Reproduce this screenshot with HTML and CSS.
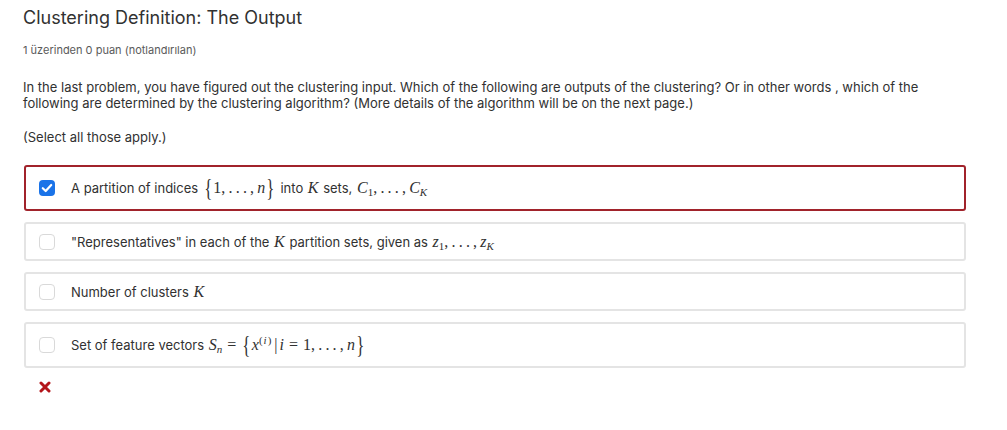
FILE: index.html
```html
<!DOCTYPE html>
<html>
<head>
<meta charset="utf-8">
<link rel="stylesheet" href="styles.css">
</head>
<body>
<div class="page">
  <h1 class="title">Clustering Definition: The Output</h1>
  <div class="points">1 üzerinden 0 puan (notlandırılan)</div>
  <p class="prompt">In the last problem, you have figured out the clustering input. Which of the following are outputs of the clustering? Or in other words , which of the following are determined by the clustering algorithm? (More details of the algorithm will be on the next page.)</p>
  <p class="prompt select">(Select all those apply.)</p>
  <div class="options">
    <label class="option selected tall">
      <span class="box checked"><svg width="16" height="16" viewBox="0 0 16 16"><rect x="0" y="0" width="16" height="16" rx="4" fill="#1a73e8"/><path d="M3.8 8.2 L6.7 11 L12.2 5" fill="none" stroke="#fff" stroke-width="2.2" stroke-linecap="round" stroke-linejoin="round"/></svg></span>
      <span class="text">A partition of indices <span class="m"><span class="brace">{</span>1,&thinsp;.&thinsp;.&thinsp;.&thinsp;,&thinsp;<i>n</i><span class="brace">}</span></span> into <span class="m"><i>K</i></span> sets, <span class="m"><i>C</i><sub>1</sub>,&thinsp;.&thinsp;.&thinsp;.&thinsp;,&thinsp;<i>C</i><sub><i>K</i></sub></span></span>
    </label>
    <label class="option">
      <span class="box"></span>
      <span class="text">"Representatives" in each of the <span class="m"><i>K</i></span> partition sets, given as <span class="m"><i>z</i><sub>1</sub>,&thinsp;.&thinsp;.&thinsp;.&thinsp;,&thinsp;<i>z</i><sub><i>K</i></sub></span></span>
    </label>
    <label class="option">
      <span class="box"></span>
      <span class="text">Number of clusters <span class="m"><i>K</i></span></span>
    </label>
    <label class="option tall">
      <span class="box"></span>
      <span class="text">Set of feature vectors <span class="m"><i>S</i><sub><i>n</i></sub><span class="op">=</span><span class="brace">{</span><i>x</i><sup>(<i>i</i>)</sup><span class="bar">|</span><i>i</i><span class="op">=</span>1,&thinsp;.&thinsp;.&thinsp;.&thinsp;,&thinsp;<i>n</i><span class="brace">}</span></span></span>
    </label>
  </div>
  <div class="status"><svg class="xmark" width="12" height="12" viewBox="0 0 12 12"><path d="M2 2 L10 10 M10 2 L2 10" stroke="#b4161b" stroke-width="3" stroke-linecap="round"/></svg></div>
</div>
</body>
</html>
```

FILE: styles.css
```css
html, body {
  margin: 0;
  padding: 0;
  background: #fff;
}
body {
  font-family: Inter, "Open Sans", "Liberation Sans", sans-serif;
  color: #313131;
}
.page {
  padding: 7px 41px 0 23px;
}
.title {
  margin: 0;
  font-size: 18px;
  font-weight: 400;
  line-height: 22px;
  color: #313131;
}
.points {
  margin-top: 14px;
  font-size: 11px;
  line-height: 14px;
  color: #5a5a5a;
}
.prompt {
  margin: 22px 0 0;
  font-size: 13px;
  line-height: 16px;
  color: #313131;
}
.prompt.select {
  margin-top: 18px;
}
.options {
  margin-top: 20px;
  display: flex;
  flex-direction: column;
  gap: 11px;
  margin-left: 1px;
}
.option {
  display: flex;
  align-items: center;
  height: 39px;
  box-sizing: border-box;
  border: 2px solid #e4e4e4;
  border-radius: 3px;
  padding-left: 13px;
  font-size: 13px;
  color: #313131;
}
.option.tall {
  height: 46px;
}
.option.selected {
  border-color: #a1232b;
}
.box {
  width: 16px;
  height: 16px;
  box-sizing: border-box;
  border: 1px solid #d9d9d9;
  border-radius: 4px;
  flex: none;
  margin-right: 16px;
  display: flex;
}
.box.checked {
  border: none;
}
.m {
  font-family: "Liberation Serif", "DejaVu Serif", serif;
  font-size: 16px;
  margin: 0 1px;
}
.m i {
  font-style: italic;
}
.m sub, .m sup {
  font-size: 11px;
  line-height: 0;
}
.m sub {
  vertical-align: -3px;
}
.m sup i {
  margin: 0 1px;
}
.op {
  margin: 0 5px;
}
.bar {
  margin: 0 2px 0 3px;
}
.brace {
  font-size: 26px;
  line-height: 0;
  font-weight: 300;
  vertical-align: -3px;
  transform: scaleX(0.65);
  display: inline-block;
  margin: 0 -1px;
}
.status {
  margin: 13px 0 0 16px;
  height: 12px;
}
.xmark {
  display: block;
}
```
